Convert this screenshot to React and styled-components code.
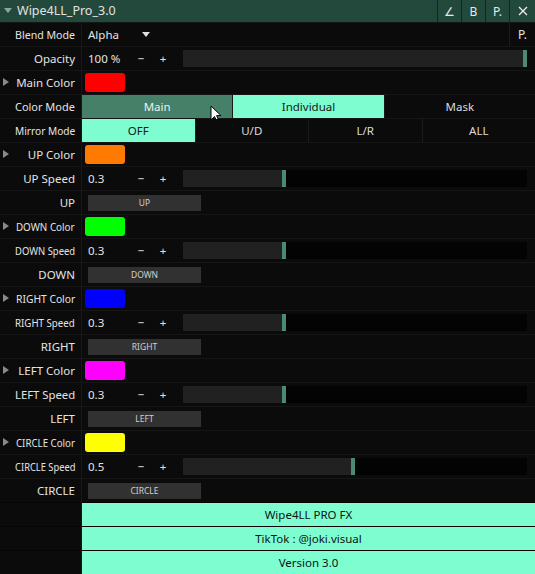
import { useLayoutEffect, useRef, useState } from 'react';
import styled, { createGlobalStyle } from 'styled-components';

const GlobalStyle = createGlobalStyle`
  body {
    margin: 0;
    background: #0b0b0b;
    font-family: "Noto Sans", "Open Sans", sans-serif;
  }
  * { box-sizing: border-box; }
`;

const MINT = '#7dfdd0';
const GREEN = '#468068';

const colorRows = [
  { name: 'UP', color: '#ff7a00', speed: 0.3 },
  { name: 'DOWN', color: '#00ff00', speed: 0.3 },
  { name: 'RIGHT', color: '#0000ff', speed: 0.3 },
  { name: 'LEFT', color: '#ff00ff', speed: 0.3 },
  { name: 'CIRCLE', color: '#ffff00', speed: 0.5 },
];

// squeezes a label so it fits the column, like the host UI does
function FitText({ children, max = 60 }) {
  const ref = useRef(null);
  const [scale, setScale] = useState(1);
  useLayoutEffect(() => {
    const w = ref.current.scrollWidth;
    setScale(w > max ? max / w : 1);
  }, [max, children]);
  return (
    <LabelText ref={ref} style={{ transform: `scaleX(${scale})` }}>
      {children}
    </LabelText>
  );
}

function Caret() {
  return (
    <CaretIcon width="7" height="8" viewBox="0 0 7 8">
      <path d="M0 0 L6 4 L0 8 Z" fill="#8a8a8a" />
    </CaretIcon>
  );
}

function SpeedRow({ label, value }) {
  return (
    <Row>
      <Label><FitText>{label}</FitText></Label>
      <Cell>
        <ValueText>{value}</ValueText>
        <Step>−</Step>
        <Step>+</Step>
        <Slider>
          <SliderFill style={{ width: `${value * 100}%` }} />
          <Handle />
        </Slider>
      </Cell>
    </Row>
  );
}

export default function App() {
  return (
    <Panel>
      <GlobalStyle />
      <Header>
        <HeaderCaret width="8" height="6" viewBox="0 0 8 6">
          <path d="M0 0 L8 0 L4 5 Z" fill="#8fa89d" />
        </HeaderCaret>
        <HeaderTitle>Wipe4LL_Pro_3.0</HeaderTitle>
        <HeaderButton>∠</HeaderButton>
        <HeaderButton>B</HeaderButton>
        <HeaderButton>P.</HeaderButton>
        <HeaderButton $wide>
          <svg width="10" height="10" viewBox="0 0 10 10">
            <path d="M1 1 L9 9 M9 1 L1 9" stroke="#e8e8e8" strokeWidth="1.4" />
          </svg>
        </HeaderButton>
      </Header>

      <Row>
        <Label><FitText>Blend Mode</FitText></Label>
        <Cell>
          <ValueText>Alpha</ValueText>
          <DropArrow width="8" height="5" viewBox="0 0 8 5">
            <path d="M0 0 L8 0 L4 5 Z" fill="#e0e0e0" />
          </DropArrow>
          <CornerButton>P.</CornerButton>
        </Cell>
      </Row>

      <Row>
        <Label><FitText>Opacity</FitText></Label>
        <Cell>
          <ValueText>100 %</ValueText>
          <Step>−</Step>
          <Step>+</Step>
          <Slider>
            <SliderFill style={{ width: '100%' }} />
            <Handle />
          </Slider>
        </Cell>
      </Row>

      <Row>
        <Label><Caret /><FitText max={59}>Main Color</FitText></Label>
        <Cell>
          <Swatch $color="#ff0000" />
        </Cell>
      </Row>

      <Row>
        <Label><FitText>Color Mode</FitText></Label>
        <Segments $count={3}>
          <Segment $bg={GREEN} $color="#e8f2ee">
            Main
            <Cursor width="12" height="18" viewBox="0 0 12 18">
              <path d="M1 1 L1 15 L4.5 11.5 L7 17 L9 16 L6.6 10.6 L11 10.6 Z" fill="#fff" stroke="#000" strokeWidth="1" />
            </Cursor>
          </Segment>
          <Segment $bg={MINT} $color="#15201c">Individual</Segment>
          <Segment>Mask</Segment>
        </Segments>
      </Row>

      <Row>
        <Label><FitText>Mirror Mode</FitText></Label>
        <Segments $count={4}>
          <Segment $bg={MINT} $color="#15201c">OFF</Segment>
          <Segment>U/D</Segment>
          <Segment>L/R</Segment>
          <Segment>ALL</Segment>
        </Segments>
      </Row>

      {colorRows.map((r) => (
        <div key={r.name}>
          <Row>
            <Label><Caret /><FitText max={59}>{r.name} Color</FitText></Label>
            <Cell>
              <Swatch $color={r.color} />
            </Cell>
          </Row>
          <SpeedRow label={`${r.name} Speed`} value={r.speed} />
          <Row>
            <Label><FitText>{r.name}</FitText></Label>
            <Cell>
              <SmallButton>{r.name}</SmallButton>
            </Cell>
          </Row>
        </div>
      ))}

      {['Wipe4LL PRO FX', 'TikTok : @joki.visual', 'Version 3.0'].map((t) => (
        <InfoRow key={t}>
          <Label />
          <InfoCell>{t}</InfoCell>
        </InfoRow>
      ))}
    </Panel>
  );
}

const Panel = styled.div`
  width: 535px;
  height: 574px;
  overflow: hidden;
  display: flex;
  flex-direction: column;
  background: #0b0b0b;
`;

const Header = styled.div`
  display: flex;
  align-items: stretch;
  height: 22px;
  background: #22493b;
  color: #e2e2e2;
`;

const HeaderCaret = styled.svg`
  margin: 8px 5px 0 4px;
`;

const HeaderTitle = styled.div`
  flex: 1;
  font-size: 12.5px;
  line-height: 22px;
`;

const HeaderButton = styled.div`
  width: ${(p) => (p.$wide ? '26px' : '24px')};
  border-left: 1px solid #10291f;
  display: flex;
  align-items: center;
  justify-content: center;
  font-size: 12px;
  color: #e8e8e8;
`;

const Row = styled.div`
  display: grid;
  grid-template-columns: 82px 1fr;
  height: 24px;
  border-top: 1px solid #161616;
`;

const InfoRow = styled(Row)`
  border-top: 1px solid #050505;
`;

const Label = styled.div`
  position: relative;
  display: flex;
  align-items: center;
  justify-content: flex-end;
  padding-right: 6px;
  border-right: 1px solid #191919;
`;

const LabelText = styled.span`
  display: inline-block;
  white-space: nowrap;
  font-size: 11.5px;
  color: #e4e4e4;
  transform-origin: right center;
`;

const CaretIcon = styled.svg`
  position: absolute;
  left: 3px;
  top: 7px;
`;

const Cell = styled.div`
  display: flex;
  align-items: center;
  font-size: 11.5px;
  color: #e4e4e4;
`;

const ValueText = styled.div`
  width: 48px;
  padding-left: 6px;
`;

const DropArrow = styled.svg`
  margin-left: 12px;
`;

const CornerButton = styled.div`
  margin-left: auto;
  width: 26px;
  height: 100%;
  border-left: 1px solid #1c1c1c;
  display: flex;
  align-items: center;
  justify-content: center;
  font-size: 12px;
`;

const Step = styled.div`
  width: 22px;
  text-align: center;
`;

const Slider = styled.div`
  position: relative;
  display: flex;
  height: 17px;
  flex: 1;
  margin: 0 8px 0 9px;
  background: #030303;
`;

const SliderFill = styled.div`
  background: #212121;
`;

const Handle = styled.div`
  width: 4px;
  margin-left: -4px;
  background: #4b8a73;
`;

const Swatch = styled.div`
  width: 40px;
  height: 19px;
  margin-left: 3px;
  border-radius: 3px;
  background: ${(p) => p.$color};
`;

const SmallButton = styled.div`
  width: 113px;
  height: 16px;
  margin-left: 6px;
  background: #313131;
  color: #d0d0d0;
  font-size: 8.5px;
  display: flex;
  align-items: center;
  justify-content: center;
`;

const Segments = styled.div`
  display: grid;
  grid-template-columns: repeat(${(p) => p.$count}, 1fr);
  gap: 1px;
  background: #1a1a1a;
`;

const Segment = styled.div`
  position: relative;
  display: flex;
  align-items: center;
  justify-content: center;
  font-size: 11.5px;
  background: ${(p) => p.$bg || '#0b0b0b'};
  color: ${(p) => p.$color || '#dcdcdc'};
`;

const Cursor = styled.svg`
  position: absolute;
  left: 128px;
  top: 10px;
`;

const InfoCell = styled.div`
  background: ${MINT};
  color: #0d1512;
  font-size: 11.5px;
  display: flex;
  align-items: center;
  justify-content: center;
`;
